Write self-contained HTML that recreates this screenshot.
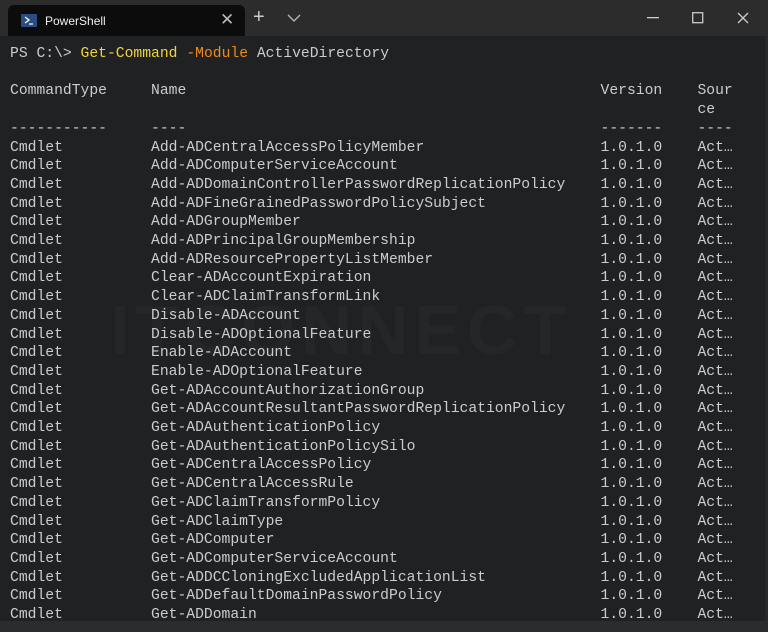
<!DOCTYPE html>
<html><head><style>
body{margin:0;width:768px;height:632px;overflow:hidden;background:#1f2123;font-family:"Liberation Mono",monospace;}
.tb{position:absolute;left:0;top:0;width:768px;height:36px;background:#2c2c2c;}
.tab{position:absolute;left:8px;top:5px;width:237px;height:31px;background:#0c0c0c;border-radius:6px 6px 0 0;}
.tab .t{position:absolute;left:37px;top:9px;font:12px "Liberation Sans",sans-serif;color:#eee;}
.tab .x{position:absolute;left:212px;top:5px;font:17px "Liberation Sans",sans-serif;color:#bbb;}
.ctl{position:absolute;top:4px;font:20px "Liberation Sans",sans-serif;color:#ccc;}
.term{position:absolute;left:10px;top:0;color:#cccccc;font-size:14.7px;line-height:18.7px;white-space:pre;}
.y{color:#f0d43a}.o{color:#f08a1c}
.bot{position:absolute;left:0;top:621px;width:768px;height:11px;background:#2a2c2e;}
.wm{position:absolute;left:110px;top:290px;font:bold 70px "Liberation Sans",sans-serif;color:rgba(255,255,255,0.025);letter-spacing:6px;}
</style></head><body>
<div class="tb">
<div class="tab">
<svg style="position:absolute;left:13px;top:9px" width="16" height="13"><rect x="0" y="0" width="16" height="13" rx="1" fill="#2b4c80"/><path d="M4 3l4 3-4 3" stroke="#fff" stroke-width="1.3" fill="none"/><path d="M8 10h4" stroke="#fff" stroke-width="1.2"/></svg>
<div class="t">PowerShell</div><div class="x">✕</div></div>
<div class="ctl" style="left:253px;top:6px;">+</div>
<svg style="position:absolute;left:287px;top:14px" width="14" height="9"><path d="M1 1l6 6 6-6" stroke="#bbb" stroke-width="1.3" fill="none"/></svg>
<svg style="position:absolute;left:647px;top:17px" width="12" height="2"><rect width="12" height="1.3" fill="#ccc"/></svg>
<svg style="position:absolute;left:692px;top:12px" width="12" height="12"><rect x="0.7" y="0.7" width="10" height="10" stroke="#ccc" stroke-width="1.3" fill="none"/></svg>
<svg style="position:absolute;left:737px;top:12px" width="12" height="12"><path d="M1 1l10 10M11 1L1 11" stroke="#ccc" stroke-width="1.3"/></svg>
</div>
<div class="wm">ITCONNECT</div>
<div class="term" style="top:45px">PS C:\&gt; <span class="y">Get-Command</span> <span class="o">-Module</span> ActiveDirectory

CommandType     Name                                               Version    Sour
                                                                              ce
-----------     ----                                               -------    ----
Cmdlet          Add-ADCentralAccessPolicyMember                    1.0.1.0    Act…
Cmdlet          Add-ADComputerServiceAccount                       1.0.1.0    Act…
Cmdlet          Add-ADDomainControllerPasswordReplicationPolicy    1.0.1.0    Act…
Cmdlet          Add-ADFineGrainedPasswordPolicySubject             1.0.1.0    Act…
Cmdlet          Add-ADGroupMember                                  1.0.1.0    Act…
Cmdlet          Add-ADPrincipalGroupMembership                     1.0.1.0    Act…
Cmdlet          Add-ADResourcePropertyListMember                   1.0.1.0    Act…
Cmdlet          Clear-ADAccountExpiration                          1.0.1.0    Act…
Cmdlet          Clear-ADClaimTransformLink                         1.0.1.0    Act…
Cmdlet          Disable-ADAccount                                  1.0.1.0    Act…
Cmdlet          Disable-ADOptionalFeature                          1.0.1.0    Act…
Cmdlet          Enable-ADAccount                                   1.0.1.0    Act…
Cmdlet          Enable-ADOptionalFeature                           1.0.1.0    Act…
Cmdlet          Get-ADAccountAuthorizationGroup                    1.0.1.0    Act…
Cmdlet          Get-ADAccountResultantPasswordReplicationPolicy    1.0.1.0    Act…
Cmdlet          Get-ADAuthenticationPolicy                         1.0.1.0    Act…
Cmdlet          Get-ADAuthenticationPolicySilo                     1.0.1.0    Act…
Cmdlet          Get-ADCentralAccessPolicy                          1.0.1.0    Act…
Cmdlet          Get-ADCentralAccessRule                            1.0.1.0    Act…
Cmdlet          Get-ADClaimTransformPolicy                         1.0.1.0    Act…
Cmdlet          Get-ADClaimType                                    1.0.1.0    Act…
Cmdlet          Get-ADComputer                                     1.0.1.0    Act…
Cmdlet          Get-ADComputerServiceAccount                       1.0.1.0    Act…
Cmdlet          Get-ADDCCloningExcludedApplicationList             1.0.1.0    Act…
Cmdlet          Get-ADDefaultDomainPasswordPolicy                  1.0.1.0    Act…
Cmdlet          Get-ADDomain                                       1.0.1.0    Act…</div>
<div class="bot"></div>
<div style="position:absolute;left:765px;top:36px;width:3px;height:585px;background:#26282a"></div>
</body></html>
